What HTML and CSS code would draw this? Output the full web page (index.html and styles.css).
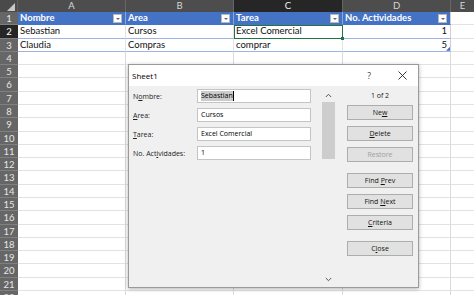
FILE: index.html
```html
<!DOCTYPE html>
<html lang="es">
<head>
<meta charset="utf-8">
<title>Sheet1</title>
<link rel="stylesheet" href="styles.css">
</head>
<body>
<div class="sheet">
  <div class="row hdr">
    <div class="corner"><span class="tri"></span></div>
    <div class="colh">A</div><div class="colh">B</div><div class="colh sel">C</div><div class="colh">D</div><div class="colh e">E</div>
  </div>
  <div class="row">
    <div class="rh">1</div>
    <div class="c th">Nombre<span class="dd"></span></div>
    <div class="c th">Area<span class="dd"></span></div>
    <div class="c th">Tarea<span class="dd"></span></div>
    <div class="c th">No. Actividades<span class="dd"></span></div>
    <div class="c e"></div>
  </div>
  <div class="row">
    <div class="rh sel">2</div>
    <div class="c td">Sebastian</div>
    <div class="c td">Cursos</div>
    <div class="c td active">Excel Comercial<span class="handle"></span></div>
    <div class="c td num">1</div>
    <div class="c e"></div>
  </div>
  <div class="row">
    <div class="rh">3</div>
    <div class="c td">Claudia</div>
    <div class="c td">Compras</div>
    <div class="c td">comprar</div>
    <div class="c td num">5<span class="resize"></span></div>
    <div class="c e"></div>
  </div>
  <div class="row"><div class="rh">4</div><div class="c"></div><div class="c"></div><div class="c"></div><div class="c"></div><div class="c e"></div></div>
  <div class="row"><div class="rh">5</div><div class="c"></div><div class="c"></div><div class="c"></div><div class="c"></div><div class="c e"></div></div>
  <div class="row"><div class="rh">6</div><div class="c"></div><div class="c"></div><div class="c"></div><div class="c"></div><div class="c e"></div></div>
  <div class="row"><div class="rh">7</div><div class="c"></div><div class="c"></div><div class="c"></div><div class="c"></div><div class="c e"></div></div>
  <div class="row"><div class="rh">8</div><div class="c"></div><div class="c"></div><div class="c"></div><div class="c"></div><div class="c e"></div></div>
  <div class="row"><div class="rh">9</div><div class="c"></div><div class="c"></div><div class="c"></div><div class="c"></div><div class="c e"></div></div>
  <div class="row"><div class="rh">10</div><div class="c"></div><div class="c"></div><div class="c"></div><div class="c"></div><div class="c e"></div></div>
  <div class="row"><div class="rh">11</div><div class="c"></div><div class="c"></div><div class="c"></div><div class="c"></div><div class="c e"></div></div>
  <div class="row"><div class="rh">12</div><div class="c"></div><div class="c"></div><div class="c"></div><div class="c"></div><div class="c e"></div></div>
  <div class="row"><div class="rh">13</div><div class="c"></div><div class="c"></div><div class="c"></div><div class="c"></div><div class="c e"></div></div>
  <div class="row"><div class="rh">14</div><div class="c"></div><div class="c"></div><div class="c"></div><div class="c"></div><div class="c e"></div></div>
  <div class="row"><div class="rh">15</div><div class="c"></div><div class="c"></div><div class="c"></div><div class="c"></div><div class="c e"></div></div>
  <div class="row"><div class="rh">16</div><div class="c"></div><div class="c"></div><div class="c"></div><div class="c"></div><div class="c e"></div></div>
  <div class="row"><div class="rh">17</div><div class="c"></div><div class="c"></div><div class="c"></div><div class="c"></div><div class="c e"></div></div>
  <div class="row"><div class="rh">18</div><div class="c"></div><div class="c"></div><div class="c"></div><div class="c"></div><div class="c e"></div></div>
  <div class="row"><div class="rh">19</div><div class="c"></div><div class="c"></div><div class="c"></div><div class="c"></div><div class="c e"></div></div>
  <div class="row"><div class="rh">20</div><div class="c"></div><div class="c"></div><div class="c"></div><div class="c"></div><div class="c e"></div></div>
  <div class="row"><div class="rh">21</div><div class="c"></div><div class="c"></div><div class="c"></div><div class="c"></div><div class="c e"></div></div>
  <div class="row"><div class="rh">22</div><div class="c"></div><div class="c"></div><div class="c"></div><div class="c"></div><div class="c e"></div></div>
</div>

<div class="dialog">
  <div class="titlebar">
    <span class="title">Sheet1</span>
    <span class="help">?</span>
    <span class="close"><svg width="9" height="9" viewBox="0 0 9 9"><path d="M0.5 0.5L8.5 8.5M8.5 0.5L0.5 8.5" stroke="#222" stroke-width="0.9" fill="none"/></svg></span>
  </div>
  <div class="body">
    <div class="fields">
      <div class="field"><span class="label">N<u>o</u>mbre:</span><div class="input"><span class="selected">Sebastian</span><span class="caret"></span></div></div>
      <div class="field"><span class="label"><u>A</u>rea:</span><div class="input">Cursos</div></div>
      <div class="field"><span class="label"><u>T</u>area:</span><div class="input">Excel Comercial</div></div>
      <div class="field"><span class="label">No. Act<u>i</u>vidades:</span><div class="input">1</div></div>
    </div>
    <div class="scroll">
      <div class="arrow"><svg width="7" height="5" viewBox="0 0 7 5"><path d="M0.8 4L3.5 1.3L6.2 4" stroke="#555" stroke-width="1" fill="none"/></svg></div>
      <div class="thumb"></div>
      <div class="spacer"></div>
      <div class="arrow"><svg width="7" height="5" viewBox="0 0 7 5"><path d="M0.8 1L3.5 3.7L6.2 1" stroke="#555" stroke-width="1" fill="none"/></svg></div>
    </div>
    <div class="buttons">
      <div class="count">1 of 2</div>
      <div class="btn first">Ne<u>w</u></div>
      <div class="btn"><u>D</u>elete</div>
      <div class="btn disabled"><u>R</u>estore</div>
      <div class="btn group">Find <u>P</u>rev</div>
      <div class="btn">Find <u>N</u>ext</div>
      <div class="btn"><u>C</u>riteria</div>
      <div class="btn group">C<u>l</u>ose</div>
    </div>
  </div>
</div>
</body>
</html>
```

FILE: styles.css
```css
* { box-sizing: border-box; }
html, body { margin: 0; padding: 0; }
body {
  width: 474px;
  height: 295px;
  overflow: hidden;
  background: #ffffff;
  font-family: Lato, "Liberation Sans", sans-serif;
  font-size: 9.5px;
  position: relative;
}
.sheet { display: flex; flex-direction: column; }
.row { display: flex; height: 13.29px; flex: none; }
.row.hdr { height: 12px; }

.corner {
  width: 18px; background: #4a4a4a; position: relative;
  border-right: 1px solid #5e5e5e;
}
.corner .tri {
  position: absolute; right: 2px; bottom: 1px; width: 8px; height: 8px;
  background: #c8c8c8; clip-path: polygon(100% 0, 100% 100%, 0 100%);
}
.colh {
  width: 108px; background: #4d4d4d; color: #d6d6d6;
  text-align: center; line-height: 12px; font-size: 9.5px;
  border-right: 1px solid #666;
}
.colh:nth-child(4) { width: 109px; }
.colh.sel { background: #262626; color: #f2f2f2; }
.colh.e { width: 23px; border-right: none; }

.rh {
  width: 18px; background: #666666; color: #e6e6e6; text-align: center;
  line-height: 13px; border-bottom: 1px solid #808080; font-size: 9.5px;
}
.rh.sel { background: #262626; color: #ffffff; }

.c {
  width: 108px; border-right: 1px solid #dadada; border-bottom: 1px solid #e2e2e2;
  line-height: 12px; padding: 0 2px; white-space: nowrap; position: relative;
  color: #111;
}
.c:nth-child(4) { width: 109px; }
.c.e { width: 23px; border-right: none; }

.th {
  background: #4472c4; color: #ffffff; font-weight: bold;
  border-right: 1px solid #8aa6d8; border-bottom: 1px solid #4472c4;
}
.th:nth-child(5) { border-right: 1px solid #d0d0d0; }
.dd {
  position: absolute; right: 3px; top: 2px; width: 9px; height: 9px;
  background: #ffffff; border: 1px solid #b8b8b8;
}
.dd::after {
  content: ""; position: absolute; left: 2px; top: 3px;
  border-left: 2px solid transparent; border-right: 2px solid transparent;
  border-top: 2px solid #666;
}
.td { border-bottom: 1px solid #9bb4e0; border-right: 1px solid #e4e4e4; }
.td:nth-child(5) { border-right: 1px solid #d0d0d0; }
.num { text-align: right; padding-right: 3px; }
.active { outline: 1.5px solid #217346; outline-offset: -1px; z-index: 1; }
.handle {
  position: absolute; right: -2px; bottom: -2px; width: 3px; height: 3px;
  background: #217346;
}
.resize {
  position: absolute; right: 0; bottom: 0; width: 4px; height: 4px;
  background: #4472c4; clip-path: polygon(100% 0, 100% 100%, 0 100%);
}

/* Dialog window */
.dialog {
  position: absolute; left: 128px; top: 64px; width: 291px; height: 224px;
  background: #f0f0f0; border: 1px solid #9a9a9a;
  box-shadow: 0 1px 4px rgba(0,0,0,0.3);
  font-family: "Open Sans", "Noto Sans", sans-serif; font-size: 7px; color: #000;
  display: flex; flex-direction: column;
}
.titlebar {
  height: 21px; background: #ffffff; display: flex; align-items: center;
  padding-left: 3px; flex: none;
}
.title { font-size: 8px; flex: 1; }
.help { width: 34px; text-align: center; font-size: 8.5px; color: #333; margin-right: 0; }
.close { width: 32px; display: flex; justify-content: center; align-items: center; }

.body { display: flex; flex: 1; padding: 3px 5px 0 4px; }
.fields { width: 178px; display: flex; flex-direction: column; gap: 5px; }
.field { display: flex; align-items: center; height: 14px; }
.label { width: 64px; color: #222; }
.input {
  width: 114px; height: 14px; background: #fff; border: 1px solid #c4c4c4;
  line-height: 12px; padding-left: 3px; display: flex; align-items: center;
  white-space: nowrap;
}
.selected { background: #cccccc; line-height: 10px; }
.caret { width: 1px; height: 10px; background: #000; }

.scroll {
  width: 13px; margin-left: 11px; height: 197px;
  display: flex; flex-direction: column; align-items: center;
}
.arrow { height: 13px; display: flex; align-items: center; justify-content: center; flex: none; }
.thumb { width: 13px; height: 57px; background: #cdcdcd; flex: none; }
.spacer { flex: 1; }

.buttons { width: 68px; margin-left: 12px; display: flex; flex-direction: column; }
.count { height: 14px; line-height: 14px; text-align: center; color: #222; }
.btn {
  height: 15px; margin-top: 6px; background: #e1e1e1; border: 1px solid #adadad;
  text-align: center; line-height: 13px; color: #111;
}
.btn.first { margin-top: 2px; }
.btn.group { margin-top: 11px; }
.btn.disabled { color: #a0a0a0; }
.btn.disabled u { text-decoration: none; }
```
